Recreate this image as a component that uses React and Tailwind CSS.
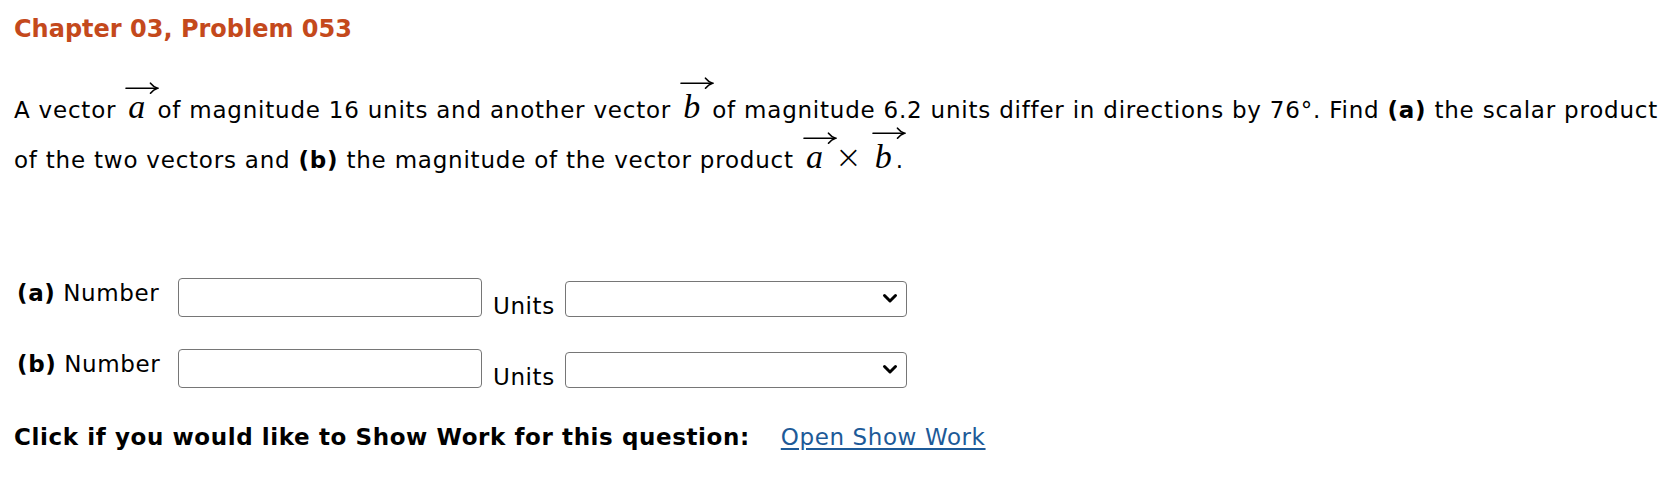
import React from 'react';

function Arrow({ className }) {
  return (
    <svg
      className={className}
      width="34"
      height="12"
      viewBox="0 0 34 12"
      fill="none"
      stroke="black"
      strokeWidth="1.6"
      strokeLinecap="round"
    >
      <path d="M1 6.2 H32" />
      <path d="M25.5 1.2 Q28.5 5 32.6 6.2 Q28.5 7.4 25.5 11.2" />
    </svg>
  );
}

function Vec({ letter, arrowClass }) {
  return (
    <span className="relative inline-block px-[4px] font-['Liberation_Serif',serif] text-[34px] italic leading-none tracking-normal">
      <Arrow className={`absolute left-[1px] ${arrowClass}`} />
      {letter}
    </span>
  );
}

function Chevron() {
  return (
    <svg
      className="pointer-events-none absolute right-[9px] top-[12px]"
      width="16"
      height="11"
      viewBox="0 0 16 11"
      fill="none"
      stroke="black"
      strokeWidth="3"
      strokeLinecap="round"
      strokeLinejoin="round"
    >
      <path d="M2.5 2.5 L8 8 L13.5 2.5" />
    </svg>
  );
}

function AnswerRow({ part, className }) {
  return (
    <div className={`flex items-start ${className}`}>
      <div className="mt-[2px] w-[164px] pl-[3px] leading-[26px]">
        <span className="font-bold">({part})</span> Number
      </div>
      <input
        type="text"
        className="h-[39px] w-[304px] rounded-[4px] border-[1.5px] border-[#767676] bg-white"
      />
      <div className="ml-[11px] mt-[15px] leading-[26px]">Units</div>
      <div className="relative ml-[10px] mt-[3px]">
        <select className="h-[36px] w-[342px] appearance-none rounded-[4px] border border-[#767676] bg-white" />
        <Chevron />
      </div>
    </div>
  );
}

export default function App() {
  return (
    <div className="h-[485px] w-[1670px] bg-white pl-[14px] font-['DejaVu_Sans',sans-serif] text-[23px] tracking-[0.6px] text-black">
      <h1 className="pt-[14px] text-[24px] font-bold leading-[30px] tracking-normal text-[#c4491c]">
        Chapter 03, Problem 053
      </h1>
      <p className="mt-[41px] leading-[50px] tracking-[0.78px]">
        A vector <Vec letter="a" arrowClass="top-[-8px]" /> of magnitude 16 units and another vector{' '}
        <Vec letter="b" arrowClass="top-[-13px]" /> of magnitude 6.2 units differ in directions by 76°.
        Find <span className="font-bold">(a)</span> the scalar product of the two vectors and{' '}
        <span className="font-bold">(b)</span> the magnitude of the vector product{' '}
        <Vec letter="a" arrowClass="top-[-8px]" />{' '}
        <span className="font-['DejaVu_Sans',sans-serif] text-[32px] font-light leading-none">×</span>{' '}
        <Vec letter="b" arrowClass="top-[-13px]" />.
      </p>
      <AnswerRow part="a" className="mt-[93px]" />
      <AnswerRow part="b" className="mt-[30px]" />
      <div className="mt-[34px] flex leading-[26px]">
        <span className="font-bold">Click if you would like to Show Work for this question:</span>
        <a href="#" className="ml-[31px] text-[#1d5a98] underline underline-offset-[3px]">
          Open Show Work
        </a>
      </div>
    </div>
  );
}
